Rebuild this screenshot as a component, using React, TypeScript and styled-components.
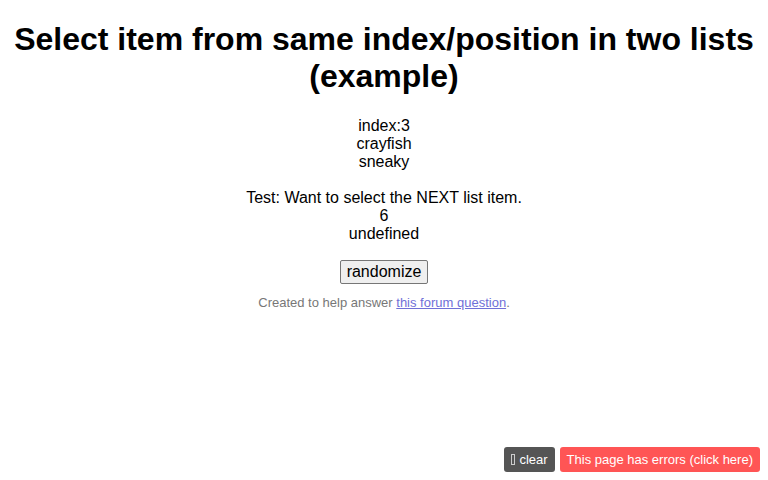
import React from "react";
import styled, { createGlobalStyle } from "styled-components";

const Global = createGlobalStyle`
  html, body { margin: 0; padding: 0; background: #fff; }
  body { margin: 8px; font-family: "Liberation Sans", Arial, sans-serif; color: #000; }
`;

const Page = styled.div`
  text-align: center;
`;

const Title = styled.h1`
  font-size: 32px;
  font-weight: bold;
  margin: 13.44px 0 21.44px;
  line-height: 37px;
`;

const Block = styled.div`
  font-size: 16px;
  line-height: 18px;
  margin: 0 0 18px;
`;

const RandomButton = styled.button`
  font-family: "Liberation Sans", Arial, sans-serif;
  font-size: 16px;
  padding: 1px 6px;
  height: 24px;
  margin-top: -1px;
  background: #efefef;
  border: 1px solid #767676;
  border-radius: 2px;
  color: #000;
`;

const Credit = styled.p`
  font-size: 13px;
  color: #777;
  margin: 11px 0;
  a { color: #7070d8; }
`;

const ErrorBar = styled.div`
  position: fixed;
  right: 8px;
  bottom: 8px;
  display: flex;
  gap: 5px;
`;

const Badge = styled.button<{ $bg: string }>`
  font-family: "Liberation Sans", Arial, sans-serif;
  font-size: 13px;
  color: #fff;
  background: ${(p) => p.$bg};
  border: none;
  border-radius: 3px;
  height: 25px;
  padding: 0 7px;
  display: flex;
  align-items: center;
  gap: 4px;
`;

const Tofu = styled.span`
  display: inline-block;
  width: 2px;
  height: 9px;
  border: 1px solid #ccc;
`;

export default function App() {
  return (
    <>
      <Global />
      <Page>
        <Title>Select item from same index/position in two lists (example)</Title>
        <Block>
          index:3<br />crayfish<br />sneaky
        </Block>
        <Block>
          Test: Want to select the NEXT list item.<br />6<br />undefined
        </Block>
        <RandomButton>randomize</RandomButton>
        <Credit>
          Created to help answer <a href="#">this forum question</a>.
        </Credit>
      </Page>
      <ErrorBar>
        <Badge $bg="#555">
          <Tofu />clear
        </Badge>
        <Badge $bg="#f55">This page has errors (click here)</Badge>
      </ErrorBar>
    </>
  );
}
